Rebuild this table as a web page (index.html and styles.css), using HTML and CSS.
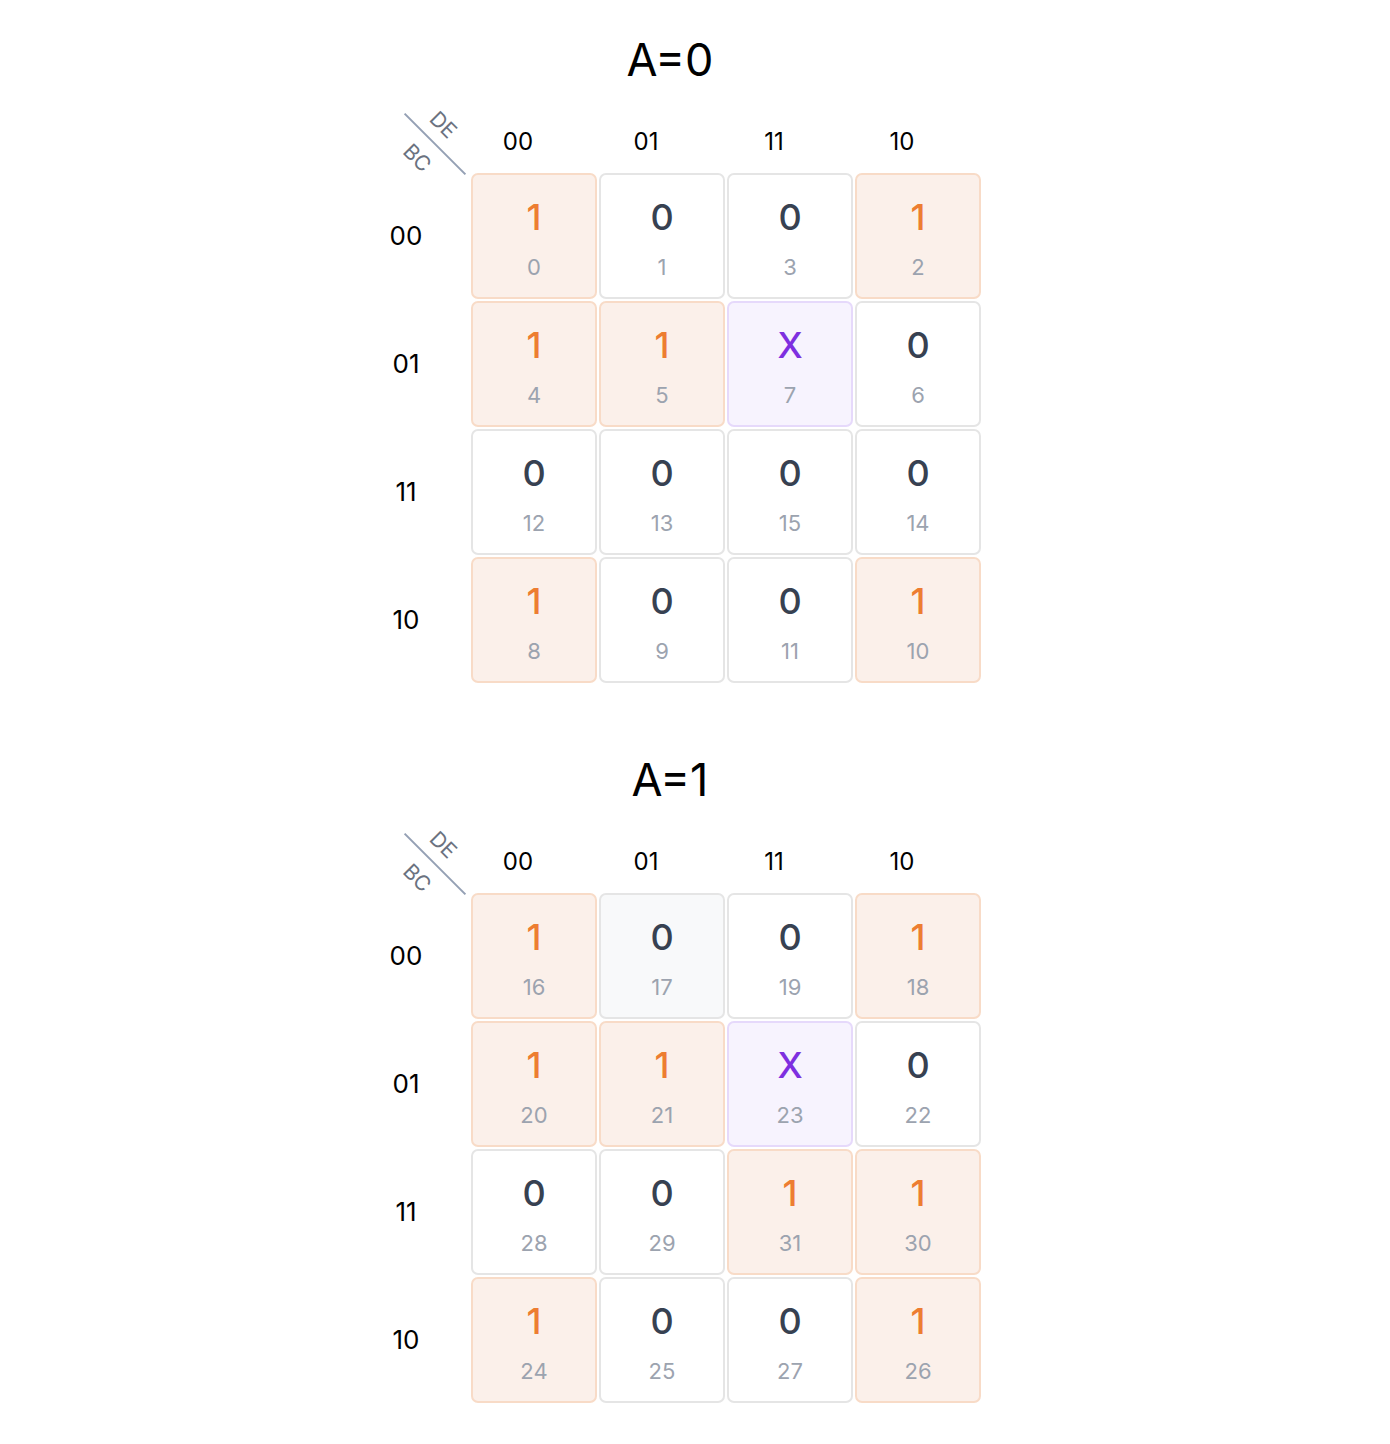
FILE: index.html
```html
<!DOCTYPE html>
<html lang="en">
<head>
<meta charset="utf-8">
<title>K-map</title>
<link rel="stylesheet" href="styles.css">
</head>
<body>
<main class="page">
  <section class="kmap">
    <h2 class="title">A=0</h2>
    <div class="grid">
      <div class="corner"><span class="diag"></span><span class="lab lab-de">DE</span><span class="lab lab-bc">BC</span></div>
      <div class="colhead">00</div><div class="colhead">01</div><div class="colhead">11</div><div class="colhead">10</div>

      <div class="rowhead">00</div>
      <div class="cell one"><span class="v">1</span><span class="i">0</span></div>
      <div class="cell zero"><span class="v">0</span><span class="i">1</span></div>
      <div class="cell zero"><span class="v">0</span><span class="i">3</span></div>
      <div class="cell one"><span class="v">1</span><span class="i">2</span></div>

      <div class="rowhead">01</div>
      <div class="cell one"><span class="v">1</span><span class="i">4</span></div>
      <div class="cell one"><span class="v">1</span><span class="i">5</span></div>
      <div class="cell dc"><span class="v">X</span><span class="i">7</span></div>
      <div class="cell zero"><span class="v">0</span><span class="i">6</span></div>

      <div class="rowhead">11</div>
      <div class="cell zero"><span class="v">0</span><span class="i">12</span></div>
      <div class="cell zero"><span class="v">0</span><span class="i">13</span></div>
      <div class="cell zero"><span class="v">0</span><span class="i">15</span></div>
      <div class="cell zero"><span class="v">0</span><span class="i">14</span></div>

      <div class="rowhead">10</div>
      <div class="cell one"><span class="v">1</span><span class="i">8</span></div>
      <div class="cell zero"><span class="v">0</span><span class="i">9</span></div>
      <div class="cell zero"><span class="v">0</span><span class="i">11</span></div>
      <div class="cell one"><span class="v">1</span><span class="i">10</span></div>
    </div>
  </section>

  <section class="kmap second">
    <h2 class="title">A=1</h2>
    <div class="grid">
      <div class="corner"><span class="diag"></span><span class="lab lab-de">DE</span><span class="lab lab-bc">BC</span></div>
      <div class="colhead">00</div><div class="colhead">01</div><div class="colhead">11</div><div class="colhead">10</div>

      <div class="rowhead">00</div>
      <div class="cell one"><span class="v">1</span><span class="i">16</span></div>
      <div class="cell zero hover"><span class="v">0</span><span class="i">17</span></div>
      <div class="cell zero"><span class="v">0</span><span class="i">19</span></div>
      <div class="cell one"><span class="v">1</span><span class="i">18</span></div>

      <div class="rowhead">01</div>
      <div class="cell one"><span class="v">1</span><span class="i">20</span></div>
      <div class="cell one"><span class="v">1</span><span class="i">21</span></div>
      <div class="cell dc"><span class="v">X</span><span class="i">23</span></div>
      <div class="cell zero"><span class="v">0</span><span class="i">22</span></div>

      <div class="rowhead">11</div>
      <div class="cell zero"><span class="v">0</span><span class="i">28</span></div>
      <div class="cell zero"><span class="v">0</span><span class="i">29</span></div>
      <div class="cell one"><span class="v">1</span><span class="i">31</span></div>
      <div class="cell one"><span class="v">1</span><span class="i">30</span></div>

      <div class="rowhead">10</div>
      <div class="cell one"><span class="v">1</span><span class="i">24</span></div>
      <div class="cell zero"><span class="v">0</span><span class="i">25</span></div>
      <div class="cell zero"><span class="v">0</span><span class="i">27</span></div>
      <div class="cell one"><span class="v">1</span><span class="i">26</span></div>
    </div>
  </section>
</main>
</body>
</html>
```

FILE: styles.css
```css
* { box-sizing: border-box; }

html, body {
  margin: 0;
  padding: 0;
  background: #ffffff;
}

body {
  font-family: Inter, "Noto Sans", "Liberation Sans", sans-serif;
  color: #000000;
}

.page {
  width: 672px;
  margin: 0 auto;
  padding-top: 34px;
}

.kmap {
  width: 622px;
}

.kmap.second {
  margin-top: 71px;
}

.title {
  margin: 0;
  font-size: 45px;
  line-height: 52px;
  font-weight: 400;
  text-align: center;
  color: #000000;
}

.grid {
  margin-top: 27px;
  display: grid;
  grid-template-columns: 110px repeat(4, 126px);
  grid-template-rows: 58px repeat(4, 126px);
  gap: 2px;
}

.corner {
  position: relative;
}

.diag {
  position: absolute;
  left: 33px;
  top: 30px;
  width: 86px;
  height: 2px;
  background: #94a0b4;
  transform: rotate(45deg);
}

.lab {
  position: absolute;
  font-size: 21px;
  line-height: 24px;
  color: #6b7280;
  transform: translate(-50%, -50%) rotate(45deg);
  white-space: nowrap;
}

.lab-de { left: 84px; top: 12px; }
.lab-bc { left: 58px; top: 45px; }

.colhead {
  display: flex;
  align-items: center;
  justify-content: center;
  padding-right: 32px;
  font-size: 24px;
  line-height: 28px;
}

.rowhead {
  display: flex;
  align-items: center;
  justify-content: center;
  padding-right: 16px;
  font-size: 26px;
  line-height: 30px;
}

.cell {
  display: flex;
  flex-direction: column;
  align-items: center;
  padding-top: 22px;
  border: 2px solid #e5e5e5;
  border-radius: 7px;
  background: #ffffff;
}

.cell .v {
  font-size: 36px;
  line-height: 40px;
  font-weight: 500;
  color: #374151;
}

.cell .i {
  margin-top: 17px;
  font-size: 22px;
  line-height: 26px;
  color: #9ca3af;
}

.cell.one {
  background: #fbf0ea;
  border-color: #f8dbc7;
}

.cell.one .v {
  color: #ed7d31;
}

.cell.dc {
  background: #f7f3fe;
  border-color: #e6d9fb;
}

.cell.dc .v {
  color: #7e2fe0;
}

.cell.hover {
  background: #f8f9fa;
}
```
